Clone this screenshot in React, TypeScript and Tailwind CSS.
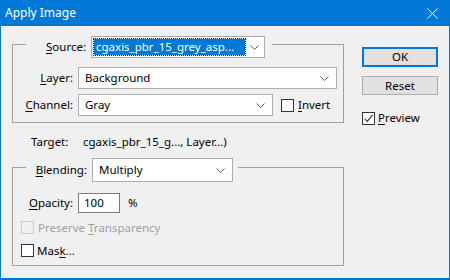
import React from 'react'

const selCls = 'flex items-center justify-between border border-[#acacac] bg-white'

function Chevron() {
  return (
    <svg width="9" height="5" viewBox="0 0 9 5" className="shrink-0">
      <path d="M0.5 0.5 L4.5 4.5 L8.5 0.5" fill="none" stroke="#606060" strokeWidth="1" />
    </svg>
  )
}

function Check({ checked = false, disabled = false }: { checked?: boolean; disabled?: boolean }) {
  return (
    <span
      className={`flex h-[13px] w-[13px] shrink-0 items-center justify-center border ${
        disabled ? 'border-[#cccccc] bg-[#f0f0f0]' : 'border-[#333333] bg-white'
      }`}
    >
      {checked && (
        <svg width="11" height="11" viewBox="0 0 11 11">
          <path d="M1.5 5.5 L4.2 8.4 L9.6 1.8" fill="none" stroke="#333333" strokeWidth="1.1" />
        </svg>
      )}
    </span>
  )
}

const U = ({ children }: { children: React.ReactNode }) => (
  <span className="underline underline-offset-[2px] decoration-[1px]">{children}</span>
)

export default function App() {
  return (
    <div className="flex h-[280px] w-[450px] flex-col bg-[#0078d7] px-px pb-[2px] font-['Noto_Sans',sans-serif] text-[11.5px] leading-[16px] text-black">
      {/* title bar */}
      <div className="flex h-[26px] shrink-0 items-center justify-between pl-[4px] pr-[11px] text-[12px] text-white">
        <span>Apply Image</span>
        <svg width="11" height="11" viewBox="0 0 11 11">
          <path d="M0.5 0.5 L10.5 10.5 M10.5 0.5 L0.5 10.5" stroke="white" strokeWidth="1" />
        </svg>
      </div>

      <div className="flex flex-1 bg-[#f0f0f0] pl-[11px] pt-[4px]">
        {/* left column */}
        <div className="flex w-[332px] flex-col">
          <fieldset className="m-0 min-w-0 border border-[#a0a0a0] p-0 pb-[6px]">
            <legend className="ml-[13px] pr-[7px] pt-[6px]">
              <div className="flex items-center">
                <span className="w-[60px] text-right">
                  <U>S</U>ource:
                </span>
                <div className={`${selCls} ml-[5px] h-[22px] w-[174px] pl-[2px] pr-[5px]`}>
                  <span className="flex h-[16px] w-[151px] items-center bg-[#0078d7] px-[2px] text-white outline-1 outline-dotted outline-[#222]">
                    cgaxis_pbr_15_grey_asp...
                  </span>
                  <Chevron />
                </div>
              </div>
            </legend>
            <div className="mt-[9px] flex items-center">
              <span className="w-[60px] text-right">
                <U>L</U>ayer:
              </span>
              <div className={`${selCls} ml-[5px] h-[22px] w-[259px] pl-[6px] pr-[7px]`}>
                <span>Background</span>
                <Chevron />
              </div>
            </div>
            <div className="mt-[5px] flex items-center">
              <span className="w-[60px] text-right">
                <U>C</U>hannel:
              </span>
              <div className={`${selCls} ml-[5px] h-[22px] w-[195px] pl-[6px] pr-[7px]`}>
                <span>Gray</span>
                <Chevron />
              </div>
              <span className="ml-[8px]">
                <Check />
              </span>
              <span className="ml-[4px]">
                <U>I</U>nvert
              </span>
            </div>
          </fieldset>

          <div className="mb-[2px] mt-[11px] flex pl-[19px]">
            <span className="w-[52px]">Target:</span>
            <span>cgaxis_pbr_15_g..., Layer...)</span>
          </div>

          <fieldset className="m-0 min-w-0 border border-[#a0a0a0] p-0 pb-[8px]">
            <legend className="ml-[13px] pr-[5px] pt-[6px]">
              <div className="flex items-center">
                <span className="w-[61px] text-right">
                  <U>B</U>lending:
                </span>
                <div className={`${selCls} ml-[5px] h-[24px] w-[141px] pl-[6px] pr-[7px]`}>
                  <span>Multiply</span>
                  <Chevron />
                </div>
              </div>
            </legend>
            <div className="mt-[11px] flex items-center">
              <span className="w-[60px] text-right">
                <U>O</U>pacity:
              </span>
              <div className="ml-[5px] flex h-[20px] w-[42px] items-center border border-[#7a7a7a] bg-white pl-[5px]">
                100
              </div>
              <span className="ml-[8px]">%</span>
            </div>
            <div className="mt-[8px] flex h-[13px] items-center pl-[8px] text-[#a0a0a0]">
              <Check disabled />
              <span className="ml-[4px]">
                Preserve <U>T</U>ransparency
              </span>
            </div>
            <div className="mt-[10px] flex h-[13px] items-center pl-[8px]">
              <Check />
              <span className="ml-[3px]">
                Mas<U>k</U>...
              </span>
            </div>
          </fieldset>
        </div>

        {/* right column */}
        <div className="ml-[18px] flex w-[76px] flex-col pt-[17px]">
          <button className="flex h-[20px] items-center justify-center border-2 border-[#0078d7] bg-[#e1e1e1]">
            OK
          </button>
          <button className="mt-[9px] flex h-[19px] items-center justify-center border border-[#adadad] bg-[#e1e1e1]">
            Reset
          </button>
          <div className="mt-[15px] flex items-center">
            <Check checked />
            <span className="ml-[3px]">
              <U>P</U>review
            </span>
          </div>
        </div>
      </div>
    </div>
  )
}
